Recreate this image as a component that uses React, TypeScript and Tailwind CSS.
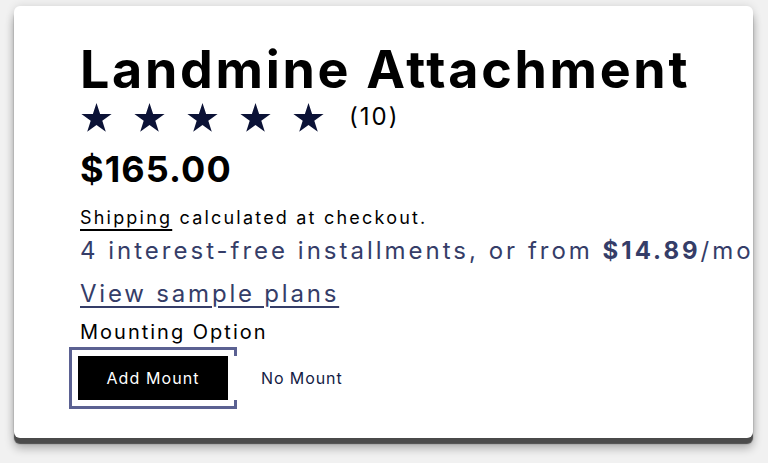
import React from "react";

const Star = () => (
  <svg width="33" height="31" viewBox="0 0 24 23" className="block">
    <path d="M12 0.8l2.7 8.1h8.5l-6.9 5 2.6 8.1L12 17l-6.9 5 2.6-8.1-6.9-5h8.5z" fill="#0b1236" />
  </svg>
);

export default function App() {
  return (
    <div className="w-[768px] h-[463px] bg-[#f1f1f1] overflow-hidden" style={{ fontFamily: "Inter, 'Liberation Sans', sans-serif" }}>
      <div className="ml-[14px] mt-[6px] w-[739px] h-[432px] bg-white rounded-[6px] overflow-hidden shadow-[0_6px_1px_rgba(70,70,70,0.95),0_10px_10px_rgba(0,0,0,0.3),0_0_8px_rgba(0,0,0,0.12)]">
        <div className="pl-[66px] pt-[34px] flex flex-col">
          <h1 className="text-[52px] leading-[60px] font-bold text-black tracking-[2.7px] whitespace-nowrap">Landmine Attachment</h1>
          <div className="flex items-center h-[34px]">
            <div className="flex gap-[20px]">
              <Star /><Star /><Star /><Star /><Star />
            </div>
            <span className="ml-[24px] text-[24px] text-black tracking-[2px]">(10)</span>
          </div>
          <div className="mt-[12px] text-[36px] leading-[46px] font-bold text-black tracking-[1.1px]">$165.00</div>
          <div className="mt-[10px] text-[18px] leading-[31px] text-black whitespace-nowrap tracking-[2.2px]">
            <span className="underline underline-offset-[5px] decoration-[1.5px]">Shipping</span> calculated at checkout.
          </div>
          <div className="text-[24px] leading-[36px] text-[#353d68] whitespace-nowrap tracking-[3px]">
            4 interest-free installments, or from <b>$14.89</b>/mo
          </div>
          <div className="mt-[9px] text-[24px] leading-[32px] text-[#353d68] underline underline-offset-[4px] decoration-[1.5px] tracking-[2.8px]">View sample plans</div>
          <div className="mt-[7px] text-[20px] leading-[30px] text-black tracking-[2px]">Mounting Option</div>
          <div className="flex items-center -ml-[11px]">
            <div className="border-[3px] border-[#5b6192] p-[6px] bg-white">
              <div className="w-[150px] h-[44px] bg-black text-white text-[16px] tracking-[1.1px] flex items-center justify-center">Add Mount</div>
            </div>
            <div className="-ml-[3px] h-[44px] pl-[27px] pr-[20px] bg-white text-[16px] tracking-[0.9px] text-[#141b45] flex items-center">No Mount</div>
          </div>
        </div>
      </div>
    </div>
  );
}
